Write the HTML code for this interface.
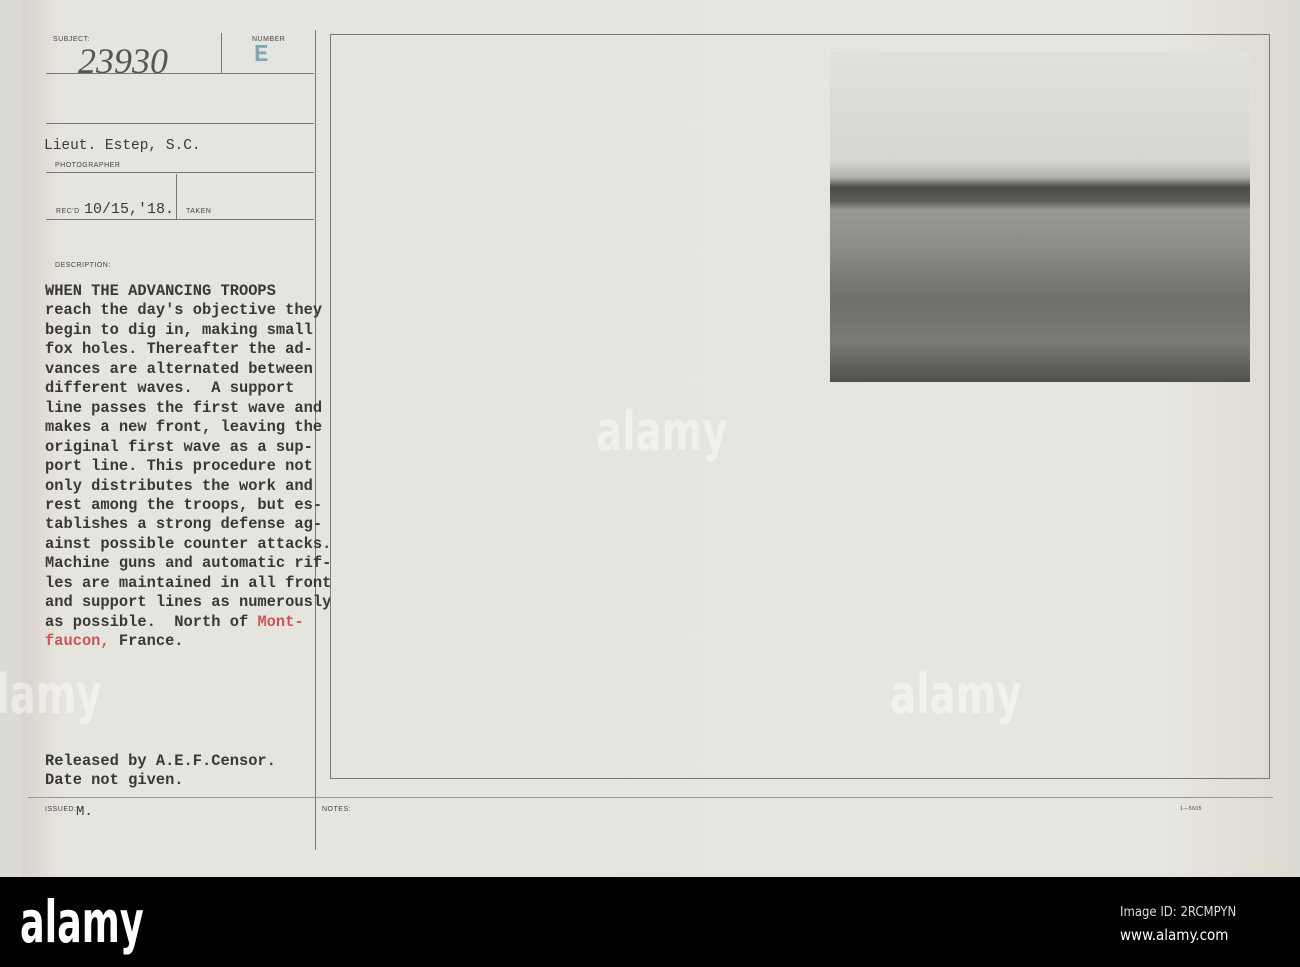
<!DOCTYPE html>
<html><head><style>
body{margin:0;width:1300px;height:967px;position:relative;overflow:hidden;background:#dcdad6;font-family:"Liberation Mono",monospace;}
.card{position:absolute;left:22px;top:0;width:1270px;height:877px;background:linear-gradient(90deg,#d8d4cc 0,#e6e4de 3%,#e7e5df 90%,#dedad2 100%);}
.t{position:absolute;color:#3c3a38;white-space:pre;}
.s{position:absolute;font-family:"Liberation Sans",sans-serif;font-size:7px;color:#444;letter-spacing:.5px;}
.h{position:absolute;height:1px;background:#777;}
.v{position:absolute;width:1px;background:#777;}
.desc{position:absolute;left:45px;top:282px;font-size:15.4px;line-height:19.45px;color:#3a3836;font-weight:bold;white-space:pre;}
.foot{position:absolute;left:0;top:877px;width:1300px;height:90px;background:#000;}
.wm{position:absolute;color:rgba(255,255,255,.45);font-family:"DejaVu Sans Condensed","DejaVu Sans",sans-serif;font-weight:bold;font-size:54px;transform:scaleX(.8);transform-origin:left top;}
</style></head><body>
<div class="card"></div>
<div class="s" style="left:53px;top:36px">SUBJECT:</div>
<div class="s" style="left:252px;top:36px">NUMBER</div>
<div class="t" style="left:78px;top:40px;font-family:'Liberation Serif',serif;font-style:italic;font-size:36px;color:#555">23930</div>
<div class="t" style="left:254px;top:42px;font-size:24px;color:#7fa7b5;font-weight:bold">E</div>
<div class="v" style="left:221px;top:33px;height:40px"></div>
<div class="h" style="left:46px;top:73px;width:268px"></div>
<div class="h" style="left:46px;top:123px;width:268px"></div>
<div class="t" style="left:44px;top:138px;font-size:14.5px">Lieut. Estep, S.C.</div>
<div class="s" style="left:55px;top:162px">PHOTOGRAPHER</div>
<div class="h" style="left:46px;top:172px;width:268px"></div>
<div class="v" style="left:176px;top:174px;height:45px"></div>
<div class="s" style="left:56px;top:208px">REC'D</div>
<div class="t" style="left:84px;top:201px;font-size:15px">10/15,'18.</div>
<div class="s" style="left:186px;top:208px">TAKEN</div>
<div class="h" style="left:46px;top:219px;width:268px"></div>
<div class="s" style="left:55px;top:262px">DESCRIPTION:</div>
<div class="v" style="left:315px;top:30px;height:820px"></div>
<div class="desc">WHEN THE ADVANCING TROOPS
reach the day's objective they
begin to dig in, making small
fox holes. Thereafter the ad-
vances are alternated between
different waves.  A support
line passes the first wave and
makes a new front, leaving the
original first wave as a sup-
port line. This procedure not
only distributes the work and
rest among the troops, but es-
tablishes a strong defense ag-
ainst possible counter attacks.
Machine guns and automatic rif-
les are maintained in all front
and support lines as numerously
as possible.  North of <span style="color:#c55">Mont-
faucon,</span> France.</div>
<div class="desc" style="top:752px">Released by A.E.F.Censor.
Date not given.</div>
<div class="s" style="left:45px;top:806px">ISSUED:</div>
<div class="t" style="left:76px;top:804px;font-size:14px">M.</div>
<div class="h" style="left:28px;top:797px;width:1245px;background:#999"></div>
<div class="s" style="left:322px;top:806px">NOTES:</div>
<div class="s" style="left:1180px;top:806px;font-size:5px">1—5605</div>
<div style="position:absolute;left:330px;top:34px;width:938px;height:743px;border:1px solid #777"></div>
<div style="position:absolute;left:830px;top:52px;width:420px;height:330px;background:linear-gradient(180deg,#e0e0dc 0,#d6d6d2 33%,#b0b0aa 38%,#4a4a46 41%,#5a5a56 45%,#9a9a94 48%,#8c8c86 60%,#6e6e6a 75%,#7a7a76 88%,#505050 100%);"></div>
<div class="wm" style="left:596px;top:400px">alamy</div>
<div class="wm" style="left:-30px;top:663px">alamy</div>
<div class="wm" style="left:890px;top:663px">alamy</div>
<div class="foot"></div>
<div class="t" style="left:20px;top:888px;font-family:'DejaVu Sans Condensed','DejaVu Sans',sans-serif;font-weight:bold;font-size:58px;color:#fff;transform:scaleX(.7);transform-origin:left top">alamy</div>
<div class="t" style="left:1120px;top:905px;font-family:'DejaVu Sans Condensed','DejaVu Sans',sans-serif;font-size:13px;color:#ddd">Image ID: 2RCMPYN</div>
<div class="t" style="left:1120px;top:926px;font-family:'DejaVu Sans Condensed','DejaVu Sans',sans-serif;font-size:15px;color:#fff">www.alamy.com</div>
</body></html>
